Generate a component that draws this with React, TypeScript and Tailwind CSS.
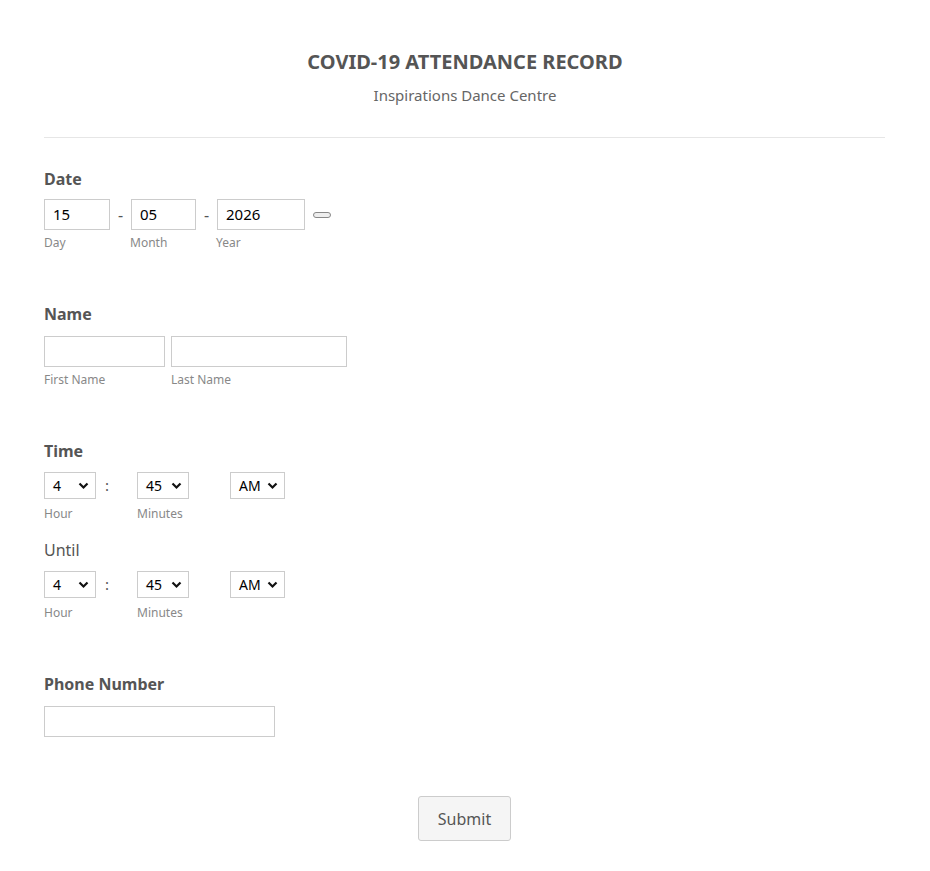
const sub = 'text-[12px] text-[#888] font-["DejaVu_Sans",sans-serif] leading-none'
const label = 'text-[16px] font-bold text-[#555] font-["Liberation_Sans",Arial,sans-serif] leading-none'
const box = 'border border-[#ccc] bg-white h-[31px] px-2 flex items-center text-[15px] text-black font-["DejaVu_Sans",sans-serif]'

function Chevron() {
  return (
    <svg width="11" height="8" viewBox="0 0 11 8" className="ml-auto">
      <path d="M1.5 1.5 L5.5 5.5 L9.5 1.5" stroke="#111" strokeWidth="2.2" fill="none" />
    </svg>
  )
}

function Sel({ value, w }: { value: string; w: string }) {
  return (
    <div className={`border border-[#ccc] bg-white h-[27px] pl-2 pr-1.5 flex items-center text-[14px] text-black font-["DejaVu_Sans",sans-serif] ${w}`}>
      <span className="mr-1">{value}</span>
      <Chevron />
    </div>
  )
}

function TimeRow() {
  return (
    <div className="flex">
      <div className="w-[93px]">
        <div className="flex items-center">
          <Sel value="4" w="w-[52px]" />
          <span className="ml-[9px] text-[15px] text-[#555] font-['DejaVu_Sans',sans-serif]">:</span>
        </div>
        <div className={`${sub} mt-[9px]`}>Hour</div>
      </div>
      <div className="w-[93px]">
        <Sel value="45" w="w-[52px]" />
        <div className={`${sub} mt-[9px]`}>Minutes</div>
      </div>
      <div>
        <Sel value="AM" w="w-[55px]" />
      </div>
    </div>
  )
}

export default function App() {
  return (
    <div className="w-[930px] h-[871px] bg-white font-['Liberation_Sans',Arial,sans-serif]">
      <div className="pt-[52px] text-center">
        <h1 className="text-[20px] font-bold text-[#555] leading-none">COVID-19 ATTENDANCE RECORD</h1>
        <p className="text-[15px] text-[#666] mt-[16px] leading-none">Inspirations Dance Centre</p>
      </div>
      <div className="mx-[44px] mt-[34px] border-t border-[#e6e6e6] w-[841px]" />

      <div className="px-[44px]">
        <div className="mt-[33px]">
          <div className={label}>Date</div>
          <div className="flex items-center mt-[12px]">
            <div className={`${box} w-[66px]`}>15</div>
            <span className="w-[21px] text-center text-[#555]">-</span>
            <div className={`${box} w-[65px]`}>05</div>
            <span className="w-[21px] text-center text-[#555]">-</span>
            <div className={`${box} w-[88px]`}>2026</div>
            <div className="ml-[8px] w-[18px] h-[6px] rounded-full border border-[#888] bg-[#eee]" />
          </div>
          <div className={`flex mt-[7px] ${sub}`}>
            <span className="w-[86px]">Day</span>
            <span className="w-[86px]">Month</span>
            <span>Year</span>
          </div>
        </div>

        <div className="mt-[57px]">
          <div className={label}>Name</div>
          <div className="flex gap-[6px] mt-[14px]">
            <div className={`${box} w-[121px] h-[30px]`} />
            <div className={`${box} w-[176px] h-[30px]`} />
          </div>
          <div className={`flex mt-[7px] ${sub}`}>
            <span className="w-[127px]">First Name</span>
            <span>Last Name</span>
          </div>
        </div>

        <div className="mt-[57px]">
          <div className={label}>Time</div>
          <div className="mt-[13px]"><TimeRow /></div>
          <div className="text-[16px] text-[#555] font-['DejaVu_Sans',sans-serif] mt-[22px] leading-none">Until</div>
          <div className="mt-[13px]"><TimeRow /></div>
        </div>

        <div className="mt-[57px]">
          <div className={label}>Phone Number</div>
          <div className={`${box} w-[231px] mt-[14px] h-[31px]`} />
        </div>
      </div>

      <div className="flex justify-center mt-[59px]">
        <button className="w-[93px] h-[45px] border border-[#ccc] rounded-[3px] bg-[#f5f5f5] text-[16px] text-[#555] ml-[-1px]">Submit</button>
      </div>
    </div>
  )
}
